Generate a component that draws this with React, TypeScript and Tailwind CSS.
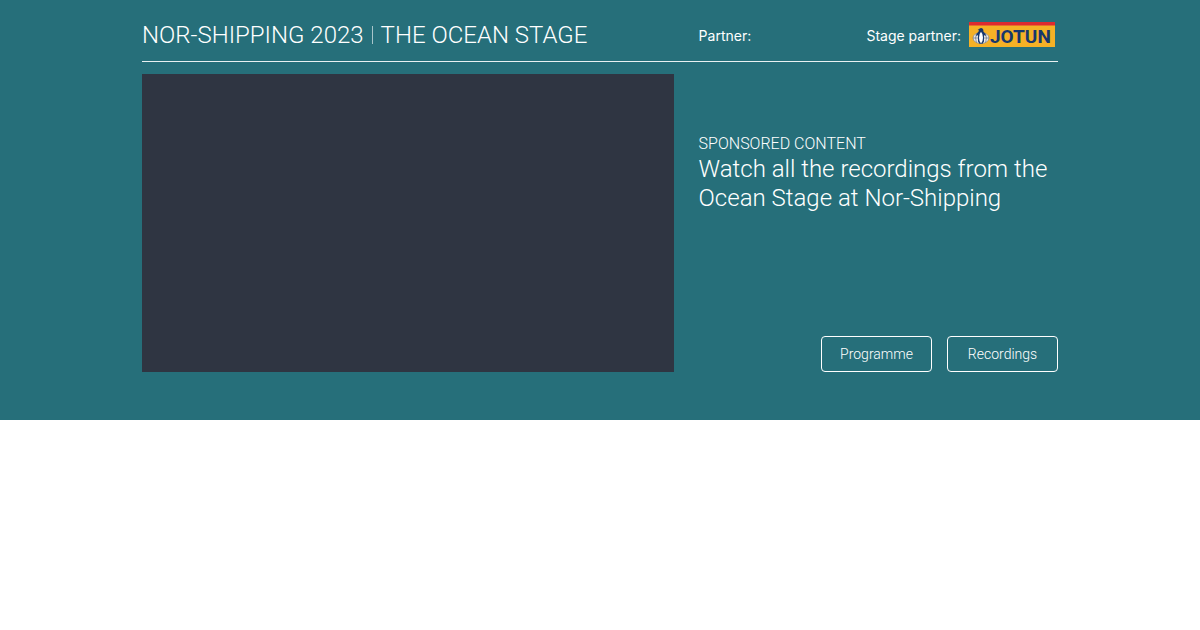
import React from 'react';

const JotunLogo: React.FC = () => (
  <svg className="block h-[25px] w-[86px]" viewBox="0 0 86 25" role="img" aria-label="Jotun">
    <rect width="86" height="25" fill="#f5b126" />
    <rect width="86" height="3.5" fill="#dd2b30" />
    {/* Penguin in front of the globe */}
    <ellipse cx="12" cy="16" rx="8" ry="5.5" fill="#eceae4" stroke="#6b7690" strokeWidth="0.6" />
    <path d="M4 16h16M7.5 11.5q-2 4.5 0 9M16.5 11.5q2 4.5 0 9" fill="none" stroke="#6b7690" strokeWidth="0.7" />
    <path d="M8.6 7.4l1.8-.7q1.6-1.4 3.1-.3q1.200 1 .9 3q2.100 1.600 2.400 4.800l-1.800-1.200v6.500l-1.500 2.300h-3l-1.500-2.300v-6.500l-1.800 1.200q.3-3.200 2.400-4.800l.2-1.600z" fill="#17376c" />
    <path d="M12 9.700q2 2 2 6q0 3.500-2 5.800q-2-2.300-2-5.800q0-4 2-6z" fill="#fff" />
    <text
      x="21"
      y="21"
      className="font-['Roboto',sans-serif] text-[19px] font-bold"
      fill="#17376c"
    >
      JOTUN
    </text>
  </svg>
);

const App: React.FC = () => {
  const links = [
    { label: 'Programme', href: '#programme' },
    { label: 'Recordings', href: '#recordings' }
  ];

  return (
    <div className="min-h-screen bg-white font-['Roboto',sans-serif]">
      <section className="bg-[#266f7a] px-4 pb-12 text-white">
        <div className="mx-auto max-w-[916px]">
          {/* Header */}
          <header className="grid items-start gap-x-[25px] border-b border-white/90 pt-[18px] pb-[9px] md:grid-cols-[531fr_359fr]">
            <h1 className="flex items-center text-2xl leading-[34px] font-light">
              NOR-SHIPPING 2023
              <span className="mx-2 h-[18px] w-px bg-white/60"></span>
              THE OCEAN STAGE
            </h1>
            <div className="flex items-start justify-between pt-1 pr-[3px] font-['Inter',sans-serif] text-sm">
              <p className="pt-1">Partner:</p>
              <div className="flex items-start gap-2">
                <p className="pt-1">Stage partner:</p>
                <a href="#jotun"><JotunLogo /></a>
              </div>
            </div>
          </header>

          {/* Video and intro */}
          <div className="grid gap-x-[25px] pt-3 md:grid-cols-[531fr_359fr]">
            <div className="aspect-[531/298] bg-[#2f3542]"></div>
            <div className="flex flex-col justify-between pt-[60px]">
              <div>
                <p className="pb-px leading-5 font-light">SPONSORED CONTENT</p>
                <h2 className="text-2xl leading-[29px] font-light">
                  Watch all the recordings from the Ocean Stage at Nor-Shipping
                </h2>
              </div>
              <nav className="flex justify-end gap-[15px]">
                {links.map((link) => (
                  <a
                    key={link.label}
                    href={link.href}
                    className="flex h-9 w-[111px] items-center justify-center rounded border border-white text-sm font-light"
                  >
                    {link.label}
                  </a>
                ))}
              </nav>
            </div>
          </div>
        </div>
      </section>
    </div>
  );
};

export default App;
